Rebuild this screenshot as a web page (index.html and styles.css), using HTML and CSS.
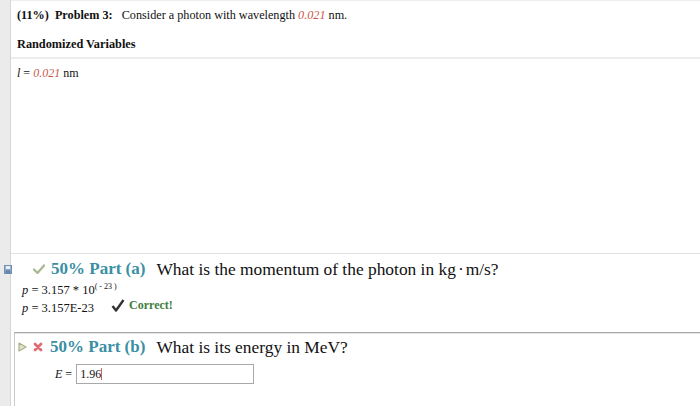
FILE: index.html
```html
<!DOCTYPE html>
<html>
<head>
<meta charset="utf-8">
<link rel="stylesheet" href="styles.css">
</head>
<body>
<div class="page">
  <div class="head"><b>(11%)&nbsp; Problem 3:</b>&nbsp;&nbsp; Consider a photon with wavelength <i class="val">0.021</i> nm.</div>
  <div class="rand"><b>Randomized Variables</b></div>
  <div class="vars"><i>l</i> = <i class="val">0.021</i> nm</div>
  <div class="part-a">
    <div class="part-title">
      <svg class="ico-save" width="8" height="9" viewBox="0 0 8 9"><rect x="0.5" y="0.5" width="7" height="8" fill="#8ea9c8" stroke="#6f8fb3"/><rect x="1.8" y="1" width="4.4" height="3" fill="#e6eef6"/><rect x="1.8" y="5.5" width="4.4" height="2.5" fill="#5f7fa6"/></svg>
      <svg class="ico-ok" width="12" height="10" viewBox="0 0 12 10"><path d="M1 5.5 L4.5 9 L11 1.5" fill="none" stroke="#a9b994" stroke-width="2.4" stroke-linecap="round" stroke-linejoin="round"/></svg>
      <span class="pct">50% Part (a)</span>
      <span class="q">What is the momentum of the photon in kg<span class="dot">·</span>m/s?</span>
    </div>
    <div class="ans"><i>p</i> = 3.157 * 10<sup>( - 23 )</sup></div>
    <div class="ans"><i>p</i> = 3.157E-23 <span class="correct"><svg class="ico-check" width="14" height="13" viewBox="0 0 14 13"><path d="M1.5 7 L5 11.5 L12.5 1" fill="none" stroke="#333" stroke-width="2.4" stroke-linejoin="round"/></svg><b>Correct!</b></span></div>
  </div>
  <div class="part-b">
    <div class="part-title">
      <svg class="ico-play" width="9" height="10" viewBox="0 0 9 10"><path d="M1 1 L8 5 L1 9 Z" fill="#dfe6c8" stroke="#a8b08a" stroke-width="1.2" stroke-linejoin="round"/></svg>
      <svg class="ico-x" width="10" height="10" viewBox="0 0 10 10"><path d="M2 2 L8 8 M8 2 L2 8" stroke="#e06a72" stroke-width="2.8" stroke-linecap="round"/></svg>
      <span class="pct">50% Part (b)</span>
      <span class="q">What is its energy in MeV?</span>
    </div>
    <div class="entry"><span class="lbl"><i>E</i> =</span><span class="box">1.96<span class="caret"></span></span></div>
  </div>
</div>
</body>
</html>
```
FILE: styles.css
```css
html, body { margin: 0; padding: 0; }
body {
  width: 700px;
  height: 406px;
  overflow: hidden;
  font-family: "Liberation Serif", "Times New Roman", serif;
  color: #111;
  background: linear-gradient(to right, #ebebeb 0 10px, #d6d6d6 10px 11px, #ffffff 11px);
}
.page { display: flex; flex-direction: column; }
.head {
  height: 29px;
  line-height: 28px;
  font-size: 12.2px;
  border-top: 1px solid #eeeeee;
  margin-left: 11px;
  padding-left: 6px;
}
.val { color: #c7594a; }
.rand {
  height: 27px;
  line-height: 28px;
  font-size: 12.3px;
  margin-left: 11px;
  padding-left: 6px;
  border-bottom: 2px solid #ececec;
}
.vars {
  height: 194px;
  font-size: 12px;
  line-height: 28px;
  margin-left: 11px;
  padding-left: 6px;
  border-bottom: 1px solid #e2e2e2;
}
.part-a { height: 78px; padding-top: 3px; box-sizing: border-box; }
.part-title {
  display: flex;
  align-items: center;
  height: 24px;
  font-size: 17px;
}
.part-a .part-title { padding-left: 4px; }
.ico-ok { margin-left: 21px; margin-right: 6px; }
.pct { color: #3a8fa4; font-weight: bold; margin-right: 11px; }
.q { color: #111; font-size: 17.4px; }
.dot { margin: 0 2px; }
.ans {
  font-size: 12.5px;
  height: 18px;
  line-height: 18px;
  padding-left: 22px;
}
.part-a .part-title + .ans { margin-top: -3px; }
.ans sup { font-size: 8px; vertical-align: 5px; }
.correct { display: inline-flex; align-items: center; margin-left: 14px; }
.ico-check { margin-right: 4px; }
.correct b { color: #3f7d3c; font-size: 12px; }
.part-b {
  margin-left: 14px;
  border-top: 1px solid #a8a8a8;
  border-left: 1px solid #c8c8c8;
  box-shadow: inset 0 1px 0 #e4e4e4;
  height: 80px;
  padding-top: 2px;
}
.part-b .part-title { padding-left: 3px; }
.ico-x { margin-left: 6px; margin-right: 7px; }
.entry {
  display: flex;
  align-items: center;
  font-size: 12px;
  padding-left: 40px;
  margin-top: 5px;
}
.lbl { margin-right: 4px; }
.box {
  display: inline-block;
  width: 173px;
  height: 18px;
  line-height: 18px;
  border: 1px solid #a9a9a9;
  padding-left: 3px;
}
.caret {
  display: inline-block;
  width: 1px;
  height: 12px;
  background: #d0605a;
  vertical-align: -2px;
}
```
